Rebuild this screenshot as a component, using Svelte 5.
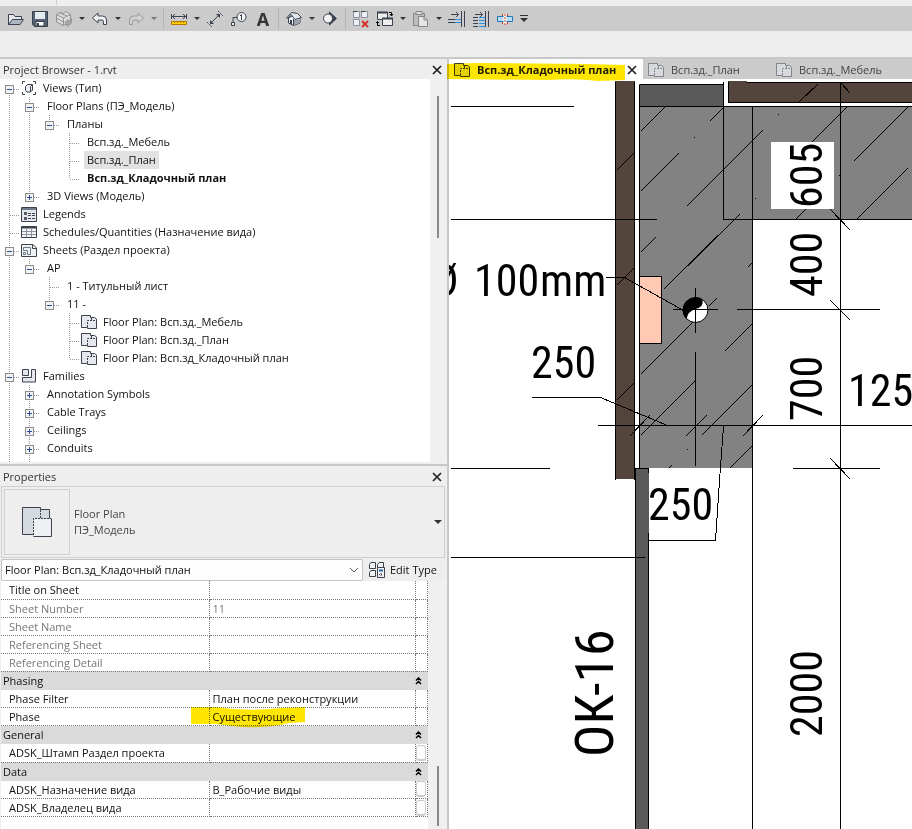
<script>
  // guides: one character per indent cell
  // f = down + branch, t = up/down + branch, l = up + branch, | = vertical only
  const tree = [
    { guides: "f", box: "-", icon: "views", text: "Views (Тип)" },
    { guides: "|t", box: "-", text: "Floor Plans (ПЭ_Модель)" },
    { guides: "||l", box: "-", text: "Планы" },
    { guides: "|| t", text: "Всп.зд._Мебель" },
    { guides: "|| t", text: "Всп.зд._План", selected: true },
    { guides: "|| l", text: "Всп.зд_Кладочный план", bold: true },
    { guides: "|l", box: "+", text: "3D Views (Модель)" },
    { guides: "t", icon: "legend", text: "Legends" },
    { guides: "t", icon: "schedule", text: "Schedules/Quantities (Назначение вида)" },
    { guides: "t", box: "-", icon: "sheets", text: "Sheets (Раздел проекта)" },
    { guides: "|l", box: "-", text: "АР" },
    { guides: "| t", text: "1 - Титульный лист" },
    { guides: "| l", box: "-", text: "11 -" },
    { guides: "|  t", icon: "plan", text: "Floor Plan: Всп.зд._Мебель" },
    { guides: "|  t", icon: "plan", text: "Floor Plan: Всп.зд._План" },
    { guides: "|  l", icon: "plan", text: "Floor Plan: Всп.зд_Кладочный план" },
    { guides: "t", box: "-", icon: "families", text: "Families" },
    { guides: "|t", box: "+", text: "Annotation Symbols" },
    { guides: "|t", box: "+", text: "Cable Trays" },
    { guides: "|t", box: "+", text: "Ceilings" },
    { guides: "|t", box: "+", text: "Conduits" },
    { guides: "|t", box: "+", text: "Curtain Panels" },
  ];

  const rows = [
    { name: "Title on Sheet", value: "" },
    { name: "Sheet Number", value: "11", readonly: true },
    { name: "Sheet Name", value: "", readonly: true },
    { name: "Referencing Sheet", value: "", readonly: true },
    { name: "Referencing Detail", value: "", readonly: true },
    { group: "Phasing" },
    { name: "Phase Filter", value: "План после реконструкции" },
    { name: "Phase", value: "Существующие", marked: true },
    { group: "General" },
    { name: "ADSK_Штамп Раздел проекта", value: "", browse: true },
    { group: "Data" },
    { name: "ADSK_Назначение вида", value: "В_Рабочие виды", browse: true },
    { name: "ADSK_Владелец вида", value: "", browse: true },
  ];

  const tools = [
    "open", "save", "cube", "caret", "undo", "caret", "redo", "caret-dim", "sep",
    "measure", "caret", "dimension", "tag", "text", "sep",
    "house", "caret", "section", "sep",
    "close-views", "switch", "caret", "paste", "caret", "align", "align-all", "split", "more",
  ];

  const tabs = ["Всп.зд_Кладочный план", "Всп.зд._План", "Всп.зд._Мебель"];
  let current = 0;
</script>

{#snippet planIcon()}
  <svg class="icon" width="16" height="16" viewBox="0 0 16 16">
    <path d="M.5 1.500H9.500V3.500H13.500L15.500 5V14.500H6.500V13.500H.5z" fill="#e6e8ee" stroke="#3b414d" />
    <path d="M6.500 13V6.500H15M10.500 6V3" fill="none" stroke="#3b414d" stroke-dasharray="2 1" />
  </svg>
{/snippet}

{#snippet closeIcon()}
  <svg width="10" height="10" viewBox="0 0 10 10">
    <path d="M1 1 9 9M9 1 1 9" stroke="#222" stroke-width="1.700" fill="none" />
  </svg>
{/snippet}

{#snippet toolIcon(name)}
  <svg width="18" height="18" viewBox="0 0 18 18" fill="none" stroke="#3a4250">
    {#if name === "open"}
      <path d="M1.500 14.500V4.500H6.500L8 6.500H14.500V9" fill="#e3e6eb" />
      <path d="M1.500 14.500 5.500 9.500H16.500L13 14.500z" fill="#aeb7c4" />
    {:else if name === "save"}
      <path d="M1.500 1.500H16.500V16.500H3.500L1.500 14.500z" fill="#566375" />
      <path d="M4 2H14V9H4z" fill="#e6ebf1" stroke="none" />
      <path d="M5 11.500H13V16H5z" fill="#fff" />
      <path d="M7 13V16" stroke-width="2" />
    {:else if name === "cube"}
      <g stroke="#929292" fill="#dcdcdc">
        <path d="M1.500 4.500 5 2.500 8 3.500 11 1.500 15.500 4.500V12L8.500 15.500 1.500 12z" />
        <path d="M1.500 4.500 8.500 8 15.500 4.500M8.500 8V15.500M2 8.500 8.500 12M5 3 12 6" fill="none" />
        <path d="M10 12.500 13 9.500V11.500Q16 11 16 8 18 15 13 14.500V16.500z" fill="#aaa" />
      </g>
    {:else if name === "undo" || name === "redo"}
      <path
        transform={name === "redo" ? "translate(18 0) scale(-1 1)" : ""}
        d="M1.500 8 7 3V6H11.500Q15.500 6 15.500 10V14.500H12.500V11.500Q12.500 10 11 10H7V13z"
        fill={name === "redo" ? "#d2d2d2" : "#f4f4f4"}
        stroke={name === "redo" ? "#999" : "#3a4250"} />
    {:else if name === "measure"}
      <path d="M2 6.500H16M5 4 2.500 6.500 5 9M13 4 15.500 6.500 13 9" />
      <path d="M1.500 4V9M16.500 4V9" />
      <path d="M1.500 11.500H16.500V14.500H1.500z" fill="#ffd200" stroke="#b87700" />
      <path d="M4.500 12V13M7.500 12V13M10.500 12V13M13.500 12V13" stroke="#b87700" />
    {:else if name === "dimension"}
      <path d="M4 14 14 4" />
      <path d="M4 10V14H8zM10 4H14V8z" fill="#3a4250" stroke="none" />
      <path d="M1 12 6 17M12 1 17 6" stroke-dasharray="2 1" />
    {:else if name === "tag"}
      <path d="M3 12V7.500H8" />
      <circle cx="11.500" cy="7" r="4.500" fill="#f5f5f5" />
      <path d="M10 6 11.500 4.500V10" />
      <path d="M1.500 12.500H4.500V15.500H1.500z" fill="#eee" />
    {:else if name === "house"}
      <path d="M3.500 8V13L8.500 15.500 15 13V8L11 4z" fill="#f0f2f4" />
      <path d="M9 9.500H15V13L9 15z" fill="#9aa3af" stroke="none" />
      <path d="M1.500 8 6.500 2.500 12.500 3.500 16.500 7.500 10 9.500 6 4.500 2.500 8.500z" fill="#e3e6ea" />
      <path d="M8.500 9V15" />
      <path d="M6 10V14" stroke-width="2" />
    {:else if name === "section"}
      <path d="M8.500 2 15.500 8.500 8.500 15z" fill="#3a4250" />
      <circle cx="7" cy="8.500" r="4.500" fill="#f2f2f2" />
    {:else if name === "close-views"}
      <g fill="#edf0f4" stroke="#8a929e">
        <path d="M1.500 1.500H7.500V7.500H1.500z" />
        <path d="M9.500 1.500H15.500V7.500H9.500z" />
        <path d="M1.500 9.500H7.500V15.500H1.500z" />
      </g>
      <path d="M1 1.500H5M9 1.500H13" />
      <path d="M10 11 16 17M16 11 10 17" stroke="#d3332b" stroke-width="2" />
    {:else if name === "switch"}
      <path d="M1.500 2.500H11.500V9.500H1.500z" fill="#eee" />
      <path d="M6.500 8.500H16.500V15.500H6.500z" fill="#eee" />
      <path d="M1 2.500H12M6 8.500H17" stroke-width="2" />
      <path d="M13 2.500H15.500V5.500M14 4 15.500 6 17 4M4 15.500H1.500V12M0 13 1.500 11.500 3 13" stroke="#000" />
    {:else if name === "paste"}
      <g stroke="#858585">
        <path d="M1.500 3.500H12.500V15.500H1.500z" fill="#bdbdbd" />
        <path d="M4 1.500H10V4.500H4z" fill="#ddd" />
        <path d="M6.500 6.500H12L15.500 10V16.500H6.500z" fill="#e6e6e6" />
        <path d="M12 7V10H15" />
      </g>
    {:else if name === "align" || name === "align-all"}
      <path d="M3 4.500H10M8 2 10.500 4.500 8 7" />
      <path d="M13.500 1V17M16.500 1V17" />
      {#if name === "align"}
        <path d="M0 9.500H7M0 12.500H7" />
        <path d="M7 9.500H13M7 12.500H13" stroke="#2891e8" />
      {:else}
        <path d="M1 7.500H6M1 10.500H6M1 13.500H6M1 16.500H6" />
        <path d="M7 7.500H13M7 10.500H13M7 13.500H13M7 16.500H13" stroke="#2891e8" />
      {/if}
    {:else if name === "split"}
      <path d="M1.500 6.500H16.500V11.500H1.500z" fill="#b9dcf2" stroke="#1f77b4" />
      <path d="M9 4V14" stroke="#fff" stroke-width="3" />
      <path d="M9 4V15M6.500 4V6M11.500 4V6M6.500 12V14M11.500 12V14" stroke="#c23b22" stroke-dasharray="2 1" />
    {/if}
  </svg>
{/snippet}

<div class="app">
  <div class="ribbon-edge"><span></span></div>
  <div class="toolbar">
    {#each tools as tool}
      {#if tool === "sep"}
        <span class="sep"></span>
      {:else if tool.startsWith("caret")}
        <button class="caret" class:dim={tool === "caret-dim"} aria-label="More options"></button>
      {:else if tool === "more"}
        <button class="more" aria-label="Customize"></button>
      {:else if tool === "text"}
        <button class="tool letter">A</button>
      {:else}
        <button class="tool" aria-label={tool}>{@render toolIcon(tool)}</button>
      {/if}
    {/each}
  </div>
  <div class="options-bar"></div>

  <div class="workspace">
    <div class="side">
      <section class="browser">
        <header>
          <span>Project Browser - 1.rvt</span>
          <button class="close" aria-label="Close">{@render closeIcon()}</button>
        </header>
        <div class="scroll-area">
          <div class="tree">
            {#each tree as node}
              <div class="node">
                {#each node.guides as g, i}
                  <svg class="guide" width="20" height="18" viewBox="0 0 20 18">
                    {#if g === "t" || g === "|"}
                      <path class="dots" d="M9.500 0V18" />
                    {:else if g === "l"}
                      <path class="dots" d="M9.500 0V10" />
                    {:else if g === "f"}
                      <path class="dots" d="M9.500 10V18" />
                    {/if}
                    {#if g !== "|" && g !== " "}
                      <path class="dots" d="M10 10.500H20" />
                    {/if}
                    {#if node.box && i === node.guides.length - 1}
                      <rect x="5.500" y="6.500" width="8" height="8" rx="1" fill="#f2f2f2" stroke="#8c8c8c" />
                      <path d={node.box === "+" ? "M7 10.500H12M9.500 8V13" : "M7 10.500H12"} stroke="#2b4b9b" />
                    {/if}
                  </svg>
                {/each}
                {#if node.icon === "plan"}
                  {@render planIcon()}
                {:else if node.icon}
                  <svg class="icon" width="16" height="16" viewBox="0 0 16 16" fill="none" stroke="#3b414d">
                    {#if node.icon === "views"}
                      <path d="M4 1.500H1.500V4M12 1.500H14.500V4M1.500 12V14.500H4M14.500 12V14.500H12" />
                      <path d="M4.500 6.500 6.500 4.500H11.500V10L9.500 12H6L4.500 10.500zM9.500 12V6.500L11 5" fill="#eceef2" />
                    {:else if node.icon === "legend"}
                      <path d="M.5 1.500H15.500V15.500H.5z" fill="#e6e8ee" />
                      <path d="M1 3H15" stroke="#6f7a8a" stroke-width="2" />
                      <path d="M3 6H6V9H3zM3 11H6V14H3z" fill="#555e6c" stroke="none" />
                      <path d="M7 7.500H14M7 9.500H14M7 12.500H14" stroke-dasharray="3 1" />
                    {:else if node.icon === "schedule"}
                      <path d="M.5 2.500H15.500V13.500H.5z" fill="#f4f5f7" />
                      <path d="M0 3.500H16" stroke-width="2" />
                      <path d="M1 7.500H15M1 10.500H15M5.500 5V13M10.500 5V13" stroke="#8b93a0" />
                    {:else if node.icon === "sheets"}
                      <path d="M.5 2.500H12L15.500 6V14.500H.5zM11.500 3V6.500H15" fill="#f1f2f5" />
                      <path d="M2.500 5.500H9.500V12.500H6.500V8.500H2.500zM2.500 10.500H4.500V12.500H2.500z" stroke="#6f7a8a" />
                    {:else}
                      <path d="M1.500 1.500H7.500V7.500H1.500z" fill="#e6e8ee" />
                      <path d="M10.500 1.500H14.500V14H1.500V9.500H10.500z" fill="#e6e8ee" />
                    {/if}
                  </svg>
                {/if}
                <span class="label" class:selected={node.selected} class:bold={node.bold}>{node.text}</span>
              </div>
            {/each}
          </div>
          <div class="track browser-track"><span></span></div>
        </div>
      </section>

      <section class="properties">
        <header>
          <span>Properties</span>
          <button class="close" aria-label="Close">{@render closeIcon()}</button>
        </header>
        <button class="type-box">
          <span class="preview">
            <svg width="32" height="32" viewBox="0 0 32 32" stroke="#3b414d" fill="#d5d9e0">
              <path d="M1.500 1.500H19.500V3.500H28.500V12.500H30.500V30.500H12.500V28.500H1.500z" stroke="none" />
              <path d="M13 13H30V30H13z" fill="#eef0f4" stroke="none" />
              <path d="M12.500 28.500H1.500V1.500H19.500V3.500H28.500V12.500M30.500 12.500V30.500H12.500" fill="none" />
              <path d="M12.500 29V12.500H30M19.500 4V12" fill="none" stroke-dasharray="2 1" />
            </svg>
          </span>
          <span class="type-name">Floor Plan<br />ПЭ_Модель</span>
          <span class="arrow"></span>
        </button>
        <div class="instance">
          <div class="combo">
            <select aria-label="View">
              <option>Floor Plan: Всп.зд_Кладочный план</option>
            </select>
            <svg width="10" height="6" viewBox="0 0 10 6">
              <path d="M1 1 5 5 9 1" fill="none" stroke="#555" />
            </svg>
          </div>
          <button class="edit-type">
            <svg width="16" height="16" viewBox="0 0 16 16" fill="#f3f4f6" stroke="#3b414d">
              <path d="M.5 2.500 2 .5H6.500V6.500H.5zM8.500 2.500 10 .5H14.500V6.500H8.500zM.5 10.500 2 8.500H6.500V14.500H.5z" />
              <path d="M8.500 5.500H15.500V15.500H8.500z" />
              <path d="M10 8.500H14" stroke="#2465b0" stroke-width="2" />
              <path d="M10 12.500H14M12 11V14" stroke-dasharray="1 1" />
            </svg>
            Edit Type
          </button>
        </div>
        <div class="scroll-area">
          <div class="grid">
            <table>
              <tbody>
                {#each rows as row}
                  {#if row.group}
                    <tr class="group">
                      <th colspan="3">
                        <div>
                          {row.group}
                          <button aria-label="Collapse">
                            <svg width="7" height="8" viewBox="0 0 7 8">
                              <path d="M1 3.500 3.500 1 6 3.500M1 7 3.500 4.500 6 7" fill="none" stroke="#000" stroke-width="1.500" />
                            </svg>
                          </button>
                        </div>
                      </th>
                    </tr>
                  {:else}
                    <tr class:readonly={row.readonly}>
                      <th>{row.name}</th>
                      <td>
                        {row.value}
                        {#if row.marked}
                          <svg class="marker phase-marker" width="115" height="22" viewBox="0 0 115 22">
                            <path d="M0 1H25Q55 6 90 2L114 1V16L98 17Q80 22 50 21L25 18H0z" fill="#ffe600" />
                          </svg>
                        {/if}
                      </td>
                      <td class="end">
                        {#if row.browse}<button class="browse" aria-label="Browse"></button>{/if}
                      </td>
                    </tr>
                  {/if}
                {/each}
              </tbody>
            </table>
          </div>
          <div class="track grid-track"><span></span></div>
        </div>
      </section>
    </div>

    <main>
      <div class="tabs">
        {#each tabs as tab, i}
          <div class="tab" class:active={i === current}>
            <button class="tab-name" on:click={() => (current = i)}>
              {@render planIcon()}
              {tab}
            </button>
            {#if i === current}
              <button class="close" aria-label="Close view">{@render closeIcon()}</button>
            {/if}
          </div>
        {/each}
        <svg class="marker tab-marker" width="180" height="20" viewBox="0 0 180 20">
          <path d="M0 3 30 2 140 3 178 4V19L150 20Q130 17 100 19L0 18z" fill="#ffe600" />
        </svg>
      </div>

      <svg class="drawing" viewBox="449 81 463 748" preserveAspectRatio="xMinYMin slice">
        <g shape-rendering="crispEdges">
          <path d="M615 81H635V479H615z" fill="#54453c" />
          <path d="M639 84H723V106H639z" fill="#5a5a5a" />
          <path d="M728 81H747V83H912V103H728z" fill="#54453c" />
          <path d="M639 106H912V219H753V468H639z" fill="#828282" />
          <path d="M635 468H649V829H635z" fill="#5a5a5a" />
          <path d="M639 276H662V344H639z" fill="#ffc9b3" />
        </g>

        <!-- hatching -->
        <g class="thin" transform="translate(.5 .5)">
          <path d="M616 170 634 152M799 101 818 83M616 285 634 267M616 400 634 382" />
          <path d="M640 131 664 107M709 121 723 107M640 191 678 153M686 206 762 130M663 289 739 214" />
          <path d="M811 142 846 107M853 161 907 107M856 219 907 168M795 219 805 209" />
          <path d="M640 252 655 237M747 267 752 262M708 306 716 298M640 374 692 322M724 351 752 323" />
          <path d="M640 435 694 381M701 435 752 384M729 468 752 445M668 468 671 465" />
          <path d="M777 114h1M693 137h1M754 198h1M770 182h1M838 175h1M686 449h1" />
        </g>

        <!-- dimension ticks and leaders -->
        <g class="thin" transform="translate(.5 .5)">
          <path d="M840 82 850 93M830 209 850 230M830 300 850 320M830 458 850 479" />
          <path d="M629 436 649 415M685 436 706 415M742 436 762 415" />
          <path d="M605 277H624L683 310M531 397H600L667 425M723 426 719 480 715 540H648" />
        </g>

        <g class="line" transform="translate(.5 .5)">
          <path d="M450 106H573M450 219H656M450 468H549M450 557H644" />
          <path d="M615 81V479M634 81V479M639 84V468" />
          <path d="M639 84H723M639 106H912M723 81V219H912" />
          <path d="M728 81V102H912M747 81V82H912" />
          <path d="M752 106V829M840 81V829" />
          <path d="M639 276H661V343H639" />
          <path d="M597 425H912M736 309H879M792 468H879M695 351V465" />
          <path d="M635 829V468H648V472M648 532V829" />
        </g>

        <circle cx="695.500" cy="310" r="12.500" fill="#fff" stroke="#000" />
        <path d="M686.500 319A12.700 12.700 0 0 1 686.500 301 12.700 12.700 0 0 1 702.500 299.500Q704 307 695.500 309 688 311 686.500 319z" />
        <path class="line" d="M695.500 288V333M673 309.500H718" />

        <path d="M771 142H834V209H771z" fill="#fff" />

        <g class="dims">
          <text x="432" y="296">Ø</text>
          <text x="474" y="296">100</text>
          <text x="540" y="296">mm</text>
          <text x="531" y="378">250</text>
          <text x="848" y="406">125</text>
          <text x="648" y="520">250</text>
          <text transform="translate(822 208) rotate(-90)">605</text>
          <text transform="translate(822 297) rotate(-90)">400</text>
          <text transform="translate(822 421) rotate(-90)">700</text>
          <text transform="translate(822 737) rotate(-90)">2000</text>
          <text class="mark" transform="translate(613 757) rotate(-90)">ОК-16</text>
        </g>
      </svg>
    </main>
  </div>
</div>

<style>
  :global(body) {
    margin: 0;
  }

  .app {
    display: flex;
    flex-direction: column;
    height: 100vh;
    background: #eee;
    color: #111;
    font-family: "Open Sans", "Noto Sans", sans-serif;
    font-size: 11px;
    line-height: 18px;
    overflow: hidden;
  }

  button {
    display: flex;
    align-items: center;
    justify-content: center;
    padding: 0;
    border: none;
    background: none;
    color: inherit;
    font: inherit;
  }

  .ribbon-edge {
    height: 6px;
    padding-left: 56px;
  }

  .ribbon-edge span {
    display: block;
    width: 1px;
    height: 5px;
    background: #d0d0d0;
  }

  .toolbar {
    display: flex;
    height: 25px;
    padding-left: 4px;
    background: #cbcbcb;
  }

  .tool {
    width: 24px;
  }

  .letter {
    color: #333;
    font-size: 18px;
    font-weight: bold;
  }

  .sep {
    width: 1px;
    margin: 2px 3px;
    background: #b5b5b5;
  }

  .caret {
    width: 12px;
  }

  .caret::before,
  .arrow,
  .more::before {
    content: "";
    border: 3px solid transparent;
    border-top-color: #333;
    border-bottom: none;
  }

  .dim::before {
    border-top-color: #777;
  }

  .more {
    flex-direction: column;
    gap: 2px;
    width: 14px;
  }

  .more::before {
    order: 2;
    border-width: 4px;
    border-bottom: none;
  }

  .more::after {
    content: "";
    width: 8px;
    height: 1px;
    background: #333;
  }

  .options-bar {
    height: 26px;
    border-bottom: 2px solid #c8c8c8;
  }

  .workspace {
    display: grid;
    grid-template-columns: 449px 1fr;
    flex: 1;
    min-height: 0;
  }

  .side {
    display: grid;
    grid-template-rows: minmax(0, 407fr) minmax(0, 363fr);
    min-height: 0;
    border-right: 2px solid #c8c8c8;
  }

  section {
    display: flex;
    flex-direction: column;
    min-height: 0;
  }

  .browser {
    padding-bottom: 2px;
    border-bottom: 2px solid #c8c8c8;
  }

  header {
    display: flex;
    align-items: center;
    justify-content: space-between;
    flex: none;
    height: 18px;
    padding: 2px 4px 0 3px;
    color: #333;
  }

  .close {
    width: 12px;
    height: 18px;
  }

  .scroll-area {
    display: flex;
    flex: 1;
    min-height: 0;
  }

  .tree {
    flex: 1;
    overflow: hidden;
    background: #fff;
  }

  .node {
    display: flex;
    align-items: center;
    height: 18px;
    white-space: nowrap;
  }

  .guide {
    flex: none;
    shape-rendering: crispEdges;
  }

  .dots {
    fill: none;
    stroke: #999;
    stroke-dasharray: 1 1;
  }

  .icon {
    flex: none;
  }

  .node .icon {
    margin: 0 3px 0 1px;
  }

  .label {
    padding: 0 3px;
  }

  .guide + .label {
    margin-left: 4px;
  }

  .selected {
    background: #e2e2e2;
  }

  .bold {
    font-weight: bold;
  }

  .track {
    display: flex;
    width: 17px;
    box-sizing: border-box;
    padding-left: 7px;
    background: #f0f0f0;
  }

  .track span {
    width: 2px;
    background: #888;
  }

  .browser-track {
    padding-top: 17px;
  }

  .browser-track span {
    height: 142px;
  }

  .grid-track {
    align-items: flex-end;
    width: 19px;
    padding-left: 9px;
    padding-bottom: 3px;
  }

  .grid-track span {
    height: 60px;
  }

  .type-box {
    justify-content: flex-start;
    flex: none;
    margin: 0 2px 0 1px;
    padding: 2px;
    border: 1px solid #cfcfcf;
    color: #444;
    text-align: left;
    line-height: 16px;
  }

  .preview {
    display: flex;
    align-items: center;
    justify-content: center;
    width: 64px;
    height: 64px;
    border: 1px solid #cfcfcf;
  }

  .type-name {
    flex: 1;
    padding-left: 4px;
  }

  .arrow {
    border-width: 4px;
    border-bottom: none;
  }

  .instance {
    display: flex;
    flex: none;
    margin-top: 1px;
  }

  .combo {
    display: grid;
    align-items: center;
    width: 362px;
    margin-left: 1px;
  }

  .combo select,
  .combo svg {
    grid-area: 1 / 1;
  }

  .combo svg {
    justify-self: end;
    margin-right: 4px;
    pointer-events: none;
  }

  .combo select {
    appearance: none;
    height: 22px;
    padding: 0 3px;
    border: 1px solid #c4c4c4;
    border-radius: 2px;
    background: #fdfdfd;
    color: #111;
    font: inherit;
  }

  .edit-type {
    gap: 5px;
    margin-left: 6px;
  }

  .grid {
    flex: 1;
    margin-left: 1px;
    overflow: hidden;
    background: #fff;
  }

  table {
    width: 100%;
    border-collapse: collapse;
    table-layout: fixed;
  }

  th {
    font-weight: normal;
    text-align: left;
  }

  tr {
    height: 18px;
  }

  th,
  td {
    box-sizing: border-box;
    height: 18px;
    padding: 0 2px 0 8px;
    border: 1px dotted #777;
    border-top: none;
    line-height: 17px;
    white-space: nowrap;
  }

  th {
    width: 208px;
    border-left: none;
  }

  td {
    position: relative;
    padding-left: 3px;
  }

  .readonly {
    color: #777;
  }

  .end {
    width: 12px;
    padding: 0;
  }

  .group th {
    padding: 0 6px 0 2px;
    border: none;
    background: #dadada;
    line-height: 18px;
  }

  .group div {
    display: flex;
    align-items: center;
    justify-content: space-between;
  }

  .browse {
    width: 10px;
    height: 16px;
    border: 1px solid #ccc;
    border-bottom-width: 2px;
    border-radius: 3px;
    background: #fdfdfd;
  }

  .marker {
    position: absolute;
    mix-blend-mode: multiply;
    pointer-events: none;
  }

  .phase-marker {
    top: -2px;
    left: -19px;
  }

  main {
    display: flex;
    flex-direction: column;
    min-width: 0;
    min-height: 0;
    background: #fff;
  }

  .tabs {
    display: flex;
    position: relative;
    flex: none;
    height: 20px;
    margin-bottom: 2px;
    background: #cbcbcb;
  }

  .tab {
    display: flex;
    align-items: center;
    box-sizing: border-box;
    min-width: 128px;
    padding: 2px 5px 0;
    color: #444;
    white-space: nowrap;
  }

  .tab .icon {
    opacity: 0.5;
  }

  .active {
    justify-content: space-between;
    width: 194px;
    background: #fff;
    color: #222;
    font-weight: bold;
  }

  .active .icon {
    opacity: 1;
  }

  .tab-name {
    gap: 7px;
  }

  .tab-marker {
    top: 2px;
    left: -2px;
  }

  .drawing {
    flex: 1;
    width: 100%;
    min-height: 0;
  }

  .line,
  .thin {
    fill: none;
    stroke: #000;
    shape-rendering: crispEdges;
  }

  .dims {
    font-family: "Roboto Condensed", "Liberation Sans Narrow", "DejaVu Sans Condensed", sans-serif;
    font-size: 44px;
  }

  .mark {
    font-size: 54px;
  }
</style>
